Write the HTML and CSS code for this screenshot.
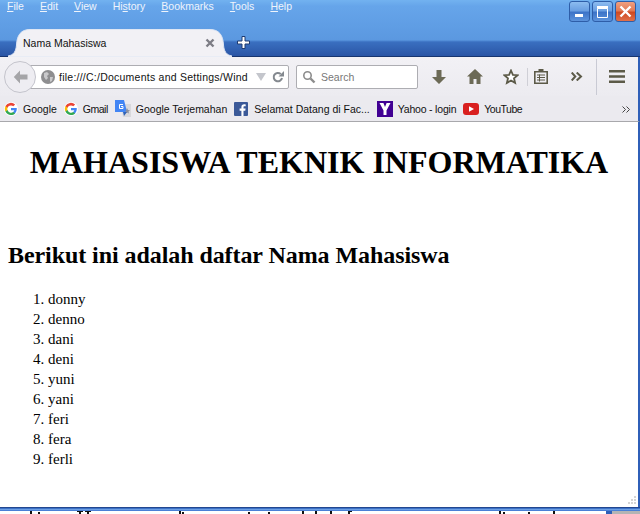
FILE: index.html
```html
<!DOCTYPE html>
<html lang="id">
<head>
<meta charset="utf-8">
<title>Nama Mahasiswa</title>
<link rel="stylesheet" href="styles.css">
</head>
<body>
<div class="window">
  <div class="titlebar">
    <nav class="menu">
      <span><u>F</u>ile</span><span><u>E</u>dit</span><span><u>V</u>iew</span><span>Hi<u>s</u>tory</span><span><u>B</u>ookmarks</span><span><u>T</u>ools</span><span><u>H</u>elp</span>
    </nav>
    <div class="controls">
      <div class="ctl"><svg viewBox="0 0 19 19" width="19" height="19"><rect x="5" y="12" width="8" height="3" fill="#fff"/></svg></div>
      <div class="ctl"><svg viewBox="0 0 19 19" width="19" height="19"><path d="M4.500 6.500h10v9h-10z" fill="none" stroke="#fff"/><rect x="4" y="4" width="11" height="2.500" fill="#fff"/></svg></div>
      <div class="ctl close"><svg viewBox="0 0 19 19" width="19" height="19"><path d="M4.500 4.500l10 10M14.500 4.500l-10 10" stroke="#fff" stroke-width="2.400"/></svg></div>
    </div>
  </div>
  <div class="tabbar">
    <div class="tab">
      <svg class="tabshape" viewBox="0 0 224 28" width="224" height="28"><path d="M0 27C6 26 8 22 8.500 16C9 6 13 .5 22 .5H202C211 .5 215 6 215.500 16C216 22 218 26 224 27V28H0Z" fill="#f2f1f5" stroke="#dfe6f4" stroke-width="1"/></svg>
      <span class="tabtitle">Nama Mahasiswa</span>
      <svg class="tabclose" viewBox="0 0 10 10" width="10" height="10"><path d="M1.500 1.500l7 7M8.500 1.500l-7 7" stroke="#7d7d85" stroke-width="2.400"/></svg>
    </div>
    <svg class="newtab" viewBox="0 0 13 13" width="13" height="13"><path d="M5 .5h3v4.500h4.500v3H8v4.500H5V8H.5V5H5z" fill="#fff" stroke="#1e3a70" stroke-width="1"/></svg>
  </div>
  <div class="navbar">
    <div class="urlbox">
      <svg class="globe" viewBox="0 0 14 14" width="14" height="14"><circle cx="7" cy="7" r="7" fill="#8e8e90"/><path d="M3 3l3-1 2 2-2 2 1 2-2 2-2-3zM9 7l3 0-1 4-2 1z" fill="#c9c9cb"/></svg>
      <span class="url">file:///C:/Documents and Settings/Wind</span>
      <svg class="drop" viewBox="0 0 10 8" width="10" height="8"><path d="M0 0h10L5 8z" fill="#c4c6cc"/></svg>
      <svg class="reload" viewBox="0 0 12 12" width="12" height="12"><path d="M10 7a4.200 4.200 0 1 1-1.300-4" fill="none" stroke="#84898f" stroke-width="2"/><path d="M6.500 5.500H12V0z" fill="#84898f"/></svg>
    </div>
    <div class="searchbox">
      <svg viewBox="0 0 14 14" width="14" height="14"><circle cx="5.500" cy="5.500" r="3.700" fill="none" stroke="#8c8c8c" stroke-width="1.600"/><path d="M8.500 8.500l4 4" stroke="#8c8c8c" stroke-width="2.400"/></svg>
      <span>Search</span>
    </div>
    <div class="tools">
      <svg class="t-down" viewBox="0 0 14 14" width="14" height="14"><path d="M4.500 0h5v7H14l-7 7-7-7h4.500z" fill="#6c6a56"/></svg>
      <svg class="t-home" viewBox="0 0 16 15" width="16" height="15"><path d="M8 0L0 7.500h2.500V15h4v-5h3v5h4V7.500H16z" fill="#6c6a56"/></svg>
      <svg class="t-star" viewBox="0 0 16 16" width="16" height="16"><path d="M8 1.500l1.900 4.300 4.700.4-3.600 3.100 1.100 4.600L8 11.500l-4.100 2.400L5 9.300 1.400 6.200l4.700-.4z" fill="#fff" stroke="#5c5a48" stroke-width="1.800"/></svg>
      <i class="vsep short"></i>
      <svg class="t-clip" viewBox="0 0 14 15" width="14" height="15"><path d="M.8 2.800h12.400v11.400H.8z" fill="none" stroke="#5c5a48" stroke-width="1.600"/><path d="M4.500 0h5v3h-5z" fill="#5c5a48"/><path d="M3 6h8M3 8.500h8M3 11h8M5.500 5.500v7" stroke="#5c5a48"/></svg>
      <svg class="t-more" viewBox="0 0 12 9" width="12" height="9"><path d="M.7.500l3.600 4-3.600 4M5.700.500l4.300 4-4.300 4" fill="none" stroke="#5c5a48" stroke-width="2"/></svg>
      <i class="vsep tall"></i>
      <svg class="t-menu" viewBox="0 0 16 13" width="16" height="13"><path d="M0 1.200h16M0 6.500h16M0 11.800h16" stroke="#5c5a48" stroke-width="2.400"/></svg>
    </div>
    <div class="backbtn"><svg viewBox="0 0 15 14" width="15" height="14"><path d="M7 .5L.8 7 7 13.500V9.500h7.500v-5H7z" fill="#a5a5a8"/></svg></div>
  </div>
  <div class="bookmarks">
    <span class="bm"><svg viewBox="0 0 14 14" width="14" height="14"><circle cx="7" cy="7" r="7" fill="#fff"/><path d="M12.800 7.100c0-.4 0-.8-.1-1.200H7v2.300h3.300a2.800 2.800 0 0 1-1.200 1.800v1.500h2A6 6 0 0 0 12.800 7.100z" fill="#4285f4"/><path d="M7 13c1.600 0 3-.5 4.100-1.500l-2-1.500a3.700 3.700 0 0 1-5.600-2H1.500v1.600A6 6 0 0 0 7 13z" fill="#34a853"/><path d="M3.500 8a3.700 3.700 0 0 1 0-2.300V4.100h-2a6 6 0 0 0 0 5.400z" fill="#fbbc05"/><path d="M7 3.400c.9 0 1.700.3 2.300.9l1.800-1.700A6 6 0 0 0 1.500 4.100l2 1.600A3.600 3.600 0 0 1 7 3.400z" fill="#ea4335"/></svg>Google</span>
    <span class="bm tight"><svg viewBox="0 0 14 14" width="14" height="14"><circle cx="7" cy="7" r="7" fill="#fff"/><path d="M12.800 7.100c0-.4 0-.8-.1-1.200H7v2.300h3.300a2.800 2.800 0 0 1-1.200 1.800v1.500h2A6 6 0 0 0 12.800 7.100z" fill="#4285f4"/><path d="M7 13c1.600 0 3-.5 4.100-1.500l-2-1.500a3.700 3.700 0 0 1-5.600-2H1.500v1.600A6 6 0 0 0 7 13z" fill="#34a853"/><path d="M3.500 8a3.700 3.700 0 0 1 0-2.300V4.100h-2a6 6 0 0 0 0 5.400z" fill="#fbbc05"/><path d="M7 3.400c.9 0 1.700.3 2.300.9l1.800-1.700A6 6 0 0 0 1.500 4.100l2 1.600A3.600 3.600 0 0 1 7 3.400z" fill="#ea4335"/></svg>Gmail</span>
    <span class="bm"><svg viewBox="0 0 16 18" width="16" height="18"><path d="M6 4h10v13H8z" fill="#d8d8dc"/><path d="M0 0h9l3 12H0z" fill="#4285f4"/><path d="M12 8l1 2 2 .2-1.500 1.300.5 2-2-1-2 1 .5-2" fill="#8a90a0"/><path d="M8 4.500H4.500v4H8V6.500H6" fill="none" stroke="#fff"/><path d="M8 12h4l-3 4z" fill="#2f62b8"/></svg>Google Terjemahan</span>
    <span class="bm fb"><svg viewBox="0 0 14 14" width="14" height="14"><rect width="14" height="14" rx="1" fill="#3b5998"/><path d="M9.500 14V8.700h1.800l.3-2.100H9.500V5.300c0-.6.200-1 1-1h1.200V2.400C11.400 2.400 10.800 2.300 10.100 2.300c-1.600 0-2.700 1-2.700 2.800v1.500H5.600v2.100h1.800V14z" fill="#fff"/></svg>Selamat Datang di Fac...</span>
    <span class="bm snug"><svg viewBox="0 0 16 16" width="16" height="16"><rect width="16" height="16" fill="#410093"/><path d="M2.500 2h3.900L8 6l1.600-4h3.900L9.500 9.500V14h-3V9.500z" fill="#fff"/></svg>Yahoo - login</span>
    <span class="bm tight"><svg viewBox="0 0 16 12" width="16" height="12"><rect width="16" height="12" rx="3" fill="#d9201f"/><path d="M6 3.200v5.600L11 6z" fill="#fff"/></svg>YouTube</span>
    <svg class="bm-more" viewBox="0 0 8 7" width="8" height="7"><path d="M.5.500l3 3-3 3M4.500.500l3 3-3 3" fill="none" stroke="#444" stroke-width="1"/></svg>
  </div>
  <main class="page">
    <h1>MAHASISWA TEKNIK INFORMATIKA</h1>
    <h2>Berikut ini adalah daftar Nama Mahasiswa</h2>
    <ol>
      <li>donny</li><li>denno</li><li>dani</li><li>deni</li><li>yuni</li><li>yani</li><li>feri</li><li>fera</li><li>ferli</li>
    </ol>
    <svg class="grip" viewBox="0 0 10 10" width="10" height="10"><path d="M7 0h2v2H7zM4 3h2v2H4zM7 3h2v2H7zM1 6h2v2H1zM4 6h2v2H4zM7 6h2v2H7z" fill="#d5d5d5"/></svg>
  </main>
  <div class="frame-bottom"></div>
</div>
<div class="below">
  <svg class="ticks" viewBox="0 0 606 3" width="606" height="3"><path d="M30 0h2v3h-2zM38 1h2v2h-2zM77 0h6v1h-6zM79 1h2v2h-2zM85 0h6v1h-6zM87 1h2v2h-2zM179 0h2v3h-2zM182 1h2v2h-2zM248 1h2v2h-2zM268 1h2v2h-2zM302 0h2v3h-2zM315 0h2v3h-2zM330 0h2v3h-2zM348 0h4v1h-4zM348 1h2v2h-2zM499 0h2v3h-2zM503 1h2v2h-2zM528 1h2v2h-2zM553 0h2v3h-2z" fill="#111"/></svg>
  <i class="below-edge"></i>
  <i class="below-grey"></i>
</div>
</body>
</html>
```
FILE: styles.css
```css
* { box-sizing: border-box; }
html, body { margin: 0; padding: 0; width: 640px; height: 514px; overflow: hidden; background: #fff; }
body { display: flex; flex-direction: column; }
.window { width: 640px; height: 511px; flex: none; display: flex; flex-direction: column; font-family: "Liberation Sans", sans-serif; font-size: 10.500px; color: #111; }
.titlebar { height: 27px; flex: none; display: flex; justify-content: space-between; background: linear-gradient(#72b2f0 0, #66a5ea 6px, #5f9de4 100%); }
.menu { display: flex; gap: 16px; padding: 0 0 0 7px; height: 12px; line-height: 12px; color: #eef4fc; }
.controls { display: flex; gap: 2px; padding: 1px 4px 0 0; }
.ctl { width: 21px; height: 21px; border: 1px solid #2e5ea8; border-radius: 3px; background: linear-gradient(#8cbcf0, #6a9fe2 45%, #3d74c8 55%, #5b93dc); }
.ctl svg { display: block; }
.close { background: linear-gradient(#f0a080, #e27a55 45%, #cf4a22 55%, #e0704a); }
.tabbar { height: 30px; flex: none; display: flex; align-items: flex-end; padding-left: 8px; background: linear-gradient(#5f9de4 0, #5b98e0 13px, #3a6fc0 15px, #2a55a5 29px); border-bottom: 1px solid #17356f; }
.tab { position: relative; width: 224px; height: 28px; margin-bottom: -1px; display: flex; align-items: center; justify-content: space-between; padding: 0 17px 0 15px; }
.tabshape { position: absolute; left: 0; top: 0; }
.tabtitle, .tabclose { position: relative; }
.newtab { margin: 0 0 7px 5px; }
.navbar { height: 39px; flex: none; position: relative; display: flex; align-items: center; background: linear-gradient(#f2f1f5, #ecebf0); padding-left: 20px; border-right: 2px solid #2f5fb8; }
.backbtn { position: absolute; left: 4px; top: 4px; width: 32px; height: 32px; border-radius: 50%; border: 1px solid #c4c4cc; background: #eeedf2; display: flex; align-items: center; justify-content: center; }
.urlbox { width: 269px; height: 24px; border: 1px solid #adadb2; border-radius: 2px; background: #fff; display: flex; align-items: center; padding: 0 4px 0 20px; }
.url { flex: 1; padding-left: 4px; padding-top: 1px; white-space: nowrap; overflow: hidden; letter-spacing: .24px; }
.globe { flex: none; }
.drop { margin-right: 6px; flex: none; }
.reload { flex: none; }
.searchbox { margin-left: 7px; width: 122px; height: 24px; border: 1px solid #adadb2; border-radius: 2px; background: #fff; display: flex; align-items: center; gap: 5px; padding-left: 5px; color: #777; }
.tools { flex: 1; display: flex; align-items: center; height: 100%; }
.t-down { margin-left: 14px; }
.t-home { margin-left: 21px; }
.t-star { margin-left: 20px; }
.vsep { background: #cfcfd6; width: 1px; display: block; }
.short { margin-left: 8px; height: 18px; }
.t-clip { margin-left: 6px; }
.t-more { margin-left: 23px; }
.tall { margin-left: 13px; height: 36px; background: #c9cad4; }
.t-menu { margin-left: 12px; }
.bookmarks { height: 26px; flex: none; display: flex; align-items: center; gap: 7px; padding: 1px 8px 0 4px; background: #ebeaef; border-bottom: 1px solid #a8a8ac; border-right: 2px solid #2f5fb8; }
.bm { display: flex; align-items: center; gap: 5px; white-space: nowrap; }
.tight { letter-spacing: -.5px; }
.snug { letter-spacing: -.2px; }
.fb { gap: 6px; }
.bm-more { margin-left: auto; }
.page { flex: 1; position: relative; padding: 0 8px; border-right: 2px solid #2f5fb8; font-family: "Liberation Serif", serif; font-size: 16px; color: #000; background: #fff; }
h1 { margin: 22px 0 0; font-size: 32px; line-height: 37px; text-align: center; }
h2 { margin: 60px 0 0; font-size: 24px; line-height: 28px; letter-spacing: -.07px; }
ol { margin: 20px 0 0; padding-left: 40px; font-size: 15px; }
li { line-height: 20px; }
.grip { position: absolute; right: 1px; bottom: 1px; }
.frame-bottom { height: 4px; flex: none; background: linear-gradient(#23478f 0 1px, #3c72c8 1px 2px, #6e9fe2 2px 3px, #4a80d6 3px); }
.below { height: 3px; flex: none; display: flex; background: #fff; }
.ticks { display: block; flex: none; }
.below-edge { width: 6px; flex: none; background: #2f5fb8; }
.below-grey { flex: 1; background: #b4b4b4; }
```
